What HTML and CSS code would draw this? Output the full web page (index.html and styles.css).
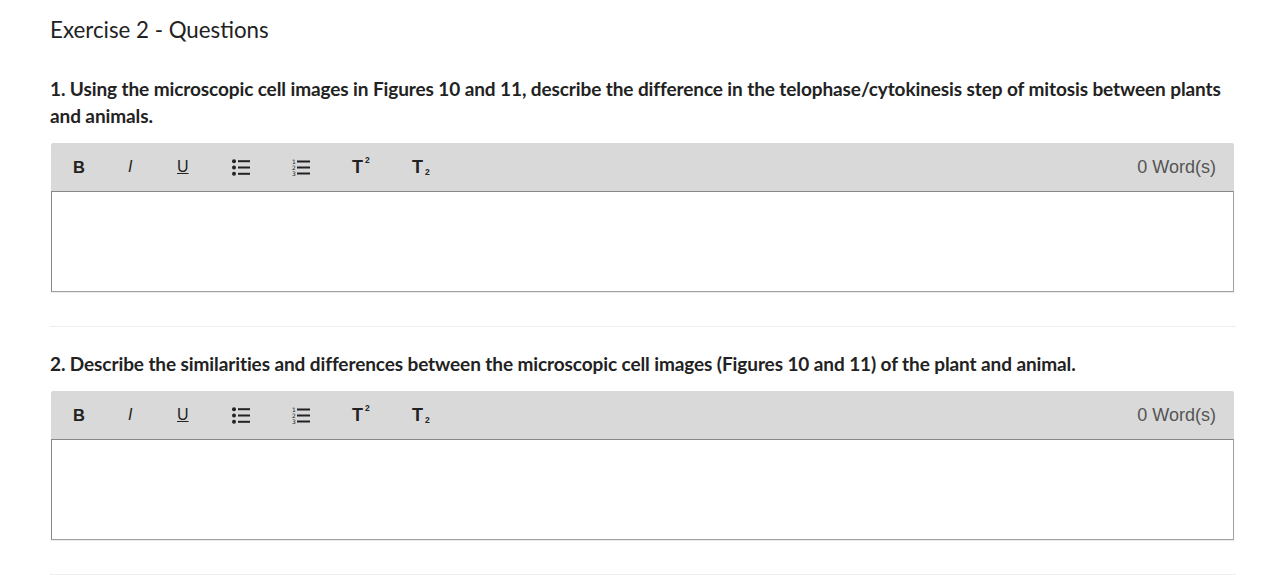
FILE: index.html
```html
<!DOCTYPE html>
<html>
<head>
<meta charset="utf-8">
<link rel="stylesheet" href="styles.css">
</head>
<body>
<div class="page">
  <h1 class="title">Exercise 2 - Questions</h1>

  <section class="question">
    <p class="prompt">1. Using the microscopic cell images in Figures 10 and 11, describe the difference in the telophase/cytokinesis step of mitosis between plants and animals.</p>
    <div class="editor">
      <div class="toolbar">
        <div class="tools">
          <span class="tool tool-b">B</span>
          <span class="tool tool-i">I</span>
          <span class="tool tool-u">U</span>
          <span class="tool tool-list">
            <svg width="18" height="17" viewBox="0 0 18 17"><circle cx="2" cy="2.2" r="2" fill="#222"/><circle cx="2" cy="8.5" r="2" fill="#222"/><circle cx="2" cy="14.8" r="2" fill="#222"/><rect x="6" y="1.2" width="12" height="2" fill="#222"/><rect x="6" y="7.5" width="12" height="2" fill="#222"/><rect x="6" y="13.8" width="12" height="2" fill="#222"/></svg>
          </span>
          <span class="tool tool-list">
            <svg width="18" height="17" viewBox="0 0 18 17"><text x="0" y="4.8" font-size="6" font-family="DejaVu Sans" fill="#222">1</text><text x="0" y="10.6" font-size="6" font-family="DejaVu Sans" fill="#222">2</text><text x="0" y="16.6" font-size="6" font-family="DejaVu Sans" fill="#222">3</text><rect x="5" y="1.5" width="13" height="2" fill="#222"/><rect x="5" y="7.5" width="13" height="2" fill="#222"/><rect x="5" y="13.5" width="13" height="2" fill="#222"/></svg>
          </span>
          <span class="tool tool-t">T<span class="sup">2</span></span>
          <span class="tool tool-t">T<span class="sub">2</span></span>
        </div>
        <span class="count">0 Word(s)</span>
      </div>
      <div class="area"></div>
    </div>
  </section>

  <section class="question">
    <p class="prompt">2. Describe the similarities and differences between the microscopic cell images (Figures 10 and 11) of the plant and animal.</p>
    <div class="editor">
      <div class="toolbar">
        <div class="tools">
          <span class="tool tool-b">B</span>
          <span class="tool tool-i">I</span>
          <span class="tool tool-u">U</span>
          <span class="tool tool-list">
            <svg width="18" height="17" viewBox="0 0 18 17"><circle cx="2" cy="2.2" r="2" fill="#222"/><circle cx="2" cy="8.5" r="2" fill="#222"/><circle cx="2" cy="14.8" r="2" fill="#222"/><rect x="6" y="1.2" width="12" height="2" fill="#222"/><rect x="6" y="7.5" width="12" height="2" fill="#222"/><rect x="6" y="13.8" width="12" height="2" fill="#222"/></svg>
          </span>
          <span class="tool tool-list">
            <svg width="18" height="17" viewBox="0 0 18 17"><text x="0" y="4.8" font-size="6" font-family="DejaVu Sans" fill="#222">1</text><text x="0" y="10.6" font-size="6" font-family="DejaVu Sans" fill="#222">2</text><text x="0" y="16.6" font-size="6" font-family="DejaVu Sans" fill="#222">3</text><rect x="5" y="1.5" width="13" height="2" fill="#222"/><rect x="5" y="7.5" width="13" height="2" fill="#222"/><rect x="5" y="13.5" width="13" height="2" fill="#222"/></svg>
          </span>
          <span class="tool tool-t">T<span class="sup">2</span></span>
          <span class="tool tool-t">T<span class="sub">2</span></span>
        </div>
        <span class="count">0 Word(s)</span>
      </div>
      <div class="area"></div>
    </div>
  </section>
</div>
</body>
</html>
```

FILE: styles.css
```css
* { box-sizing: border-box; }
html, body { margin: 0; padding: 0; background: #fff; }
body { font-family: Lato, "Open Sans", sans-serif; color: #222; }

.page {
  width: 1186px;
  margin-left: 50px;
  padding-top: 14px;
}

.title {
  font-size: 22.3px;
  font-weight: 400;
  line-height: 32px;
  margin: 0 0 29px;
  color: #222;
}

.question {
  border-bottom: 1px solid #eee;
  padding-bottom: 34px;
  margin-bottom: 23px;
}

.prompt {
  font-size: 19px;
  font-weight: 700;
  line-height: 27px;
  margin: 0 0 14px;
  letter-spacing: -0.1px;
  color: #222;
}

.editor { margin-left: 1px; margin-right: 2px; }

.toolbar {
  height: 48px;
  background: #d9d9d9;
  display: flex;
  align-items: center;
  justify-content: space-between;
  padding: 0 18px 0 22px;
  border-radius: 2px 2px 0 0;
}

.tools { display: flex; align-items: center; }

.tool {
  width: 60px;
  height: 20px;
  display: flex;
  align-items: center;
  color: #222;
  font-family: "Liberation Sans", Arial, sans-serif;
  font-size: 16px;
  line-height: 1;
}
.tool-b { font-weight: 700; width: 55px; font-size: 16.5px; }
.tool-i { font-style: italic; font-weight: 400; width: 49px; }
.tool-u { text-decoration: underline; width: 55px; }
.tool-t { font-weight: 700; font-size: 18px; }
.tool-t .sup, .tool-t .sub { font-size: 8.5px; font-weight: 700; margin-left: 2px; align-self: flex-start; }
.tool-t .sup { margin-top: -1px; }
.tool-t .sub { margin-top: 11px; }

.count {
  font-family: "Liberation Sans", Arial, sans-serif;
  font-size: 18px;
  color: #555;
}

.area {
  height: 101px;
  background: #fff;
  border: 1px solid #a0a0a0;
  border-top-color: #888;
  border-left-color: #888;
  box-shadow: 0 1px 1px rgba(0,0,0,0.08);
}
```
